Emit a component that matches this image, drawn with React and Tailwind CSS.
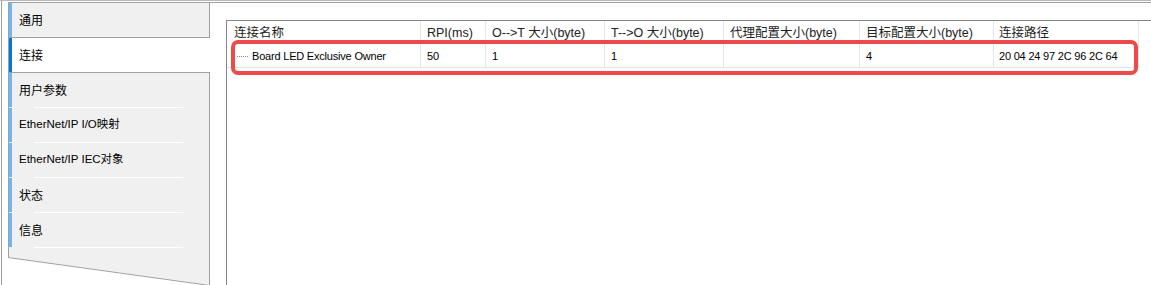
import React from "react";

const FONT = { fontFamily: '"Noto Sans CJK SC", "Noto Sans", sans-serif' };
const MIX = '"Liberation Sans", "Noto Sans CJK SC", sans-serif';

function Tab({ label, variant, small }) {
  const base = "flex flex-row w-[202px] flex-none border-l border-[#a0a0a0]";
  let cls = base;
  if (variant === "first") cls += " h-[36px] bg-[#f0f0f0] border-t border-b border-r";
  else if (variant === "selected") cls += " h-[34px] bg-white";
  else if (variant === "third") cls += " h-[36px] bg-[#f0f0f0] border-t border-r";
  else cls += " h-[35px] bg-[#f0f0f0] border-r";
  const barColor = variant === "selected" ? "bg-[#0078d7]" : "bg-[#6cb7f5]";
  const sep = variant === "third" || variant === "normal";
  return (
    <div className={cls}>
      <div className={`w-[3px] flex-none ${barColor} ${sep ? "mb-px" : ""}`} />
      <div className="flex flex-col flex-1">
        <div
          className={`flex-1 flex items-center pl-[7px] text-black ${small ? "text-[11.5px]" : "text-[12px]"}`}
          style={small ? { fontFamily: MIX } : undefined}
        >
          {label}
        </div>
        {sep && <div className="h-px ml-[22px] w-[149px] bg-white" />}
      </div>
    </div>
  );
}

const cols = [
  { w: "w-[194px]", pl: "pl-[7px]", h: "连接名称" },
  { w: "w-[65px]", pl: "pl-[6px]", h: "RPI(ms)", d: "50" },
  { w: "w-[119px]", pl: "pl-[6px]", h: "O-->T 大小(byte)", d: "1" },
  { w: "w-[119px]", pl: "pl-[6px]", h: "T-->O 大小(byte)", d: "1" },
  { w: "w-[136px]", pl: "pl-[6px]", h: "代理配置大小(byte)", d: "" },
  { w: "w-[134px]", pl: "pl-[6px]", h: "目标配置大小(byte)", d: "4" },
  { w: "w-[145px]", pl: "pl-[5px]", h: "连接路径", d: "20 04 24 97 2C 96 2C 64" },
];

export default function App() {
  return (
    <div
      className="relative w-[1151px] h-[285px] bg-white overflow-hidden flex flex-row border-t border-[#b9b9b9] pt-px"
      style={FONT}
    >
      {/* left strip */}
      <div className="w-[8px] flex-none flex flex-row -mt-[2px]">
        <div className="w-px flex-none" />
        <div className="w-px flex-none bg-[#a0a0a0]" />
      </div>

      {/* sidebar */}
      <div className="w-[202px] flex-none flex flex-col">
        <Tab label="通用" variant="first" />
        <Tab label="连接" variant="selected" />
        <Tab label="用户参数" variant="third" />
        <Tab label="EtherNet/IP I/O映射" variant="normal" small />
        <Tab label="EtherNet/IP IEC对象" variant="normal" small />
        <Tab label="状态" variant="normal" />
        <Tab label="信息" variant="normal" />
        <svg width="202" height="37" viewBox="0 0 202 37" className="block flex-none">
          <polygon points="0,0 202,0 202,37 0,9" fill="#f0f0f0" />
          <line x1="0.5" y1="0" x2="0.5" y2="9.5" stroke="#a0a0a0" strokeWidth="1" />
          <line x1="201.5" y1="0" x2="201.5" y2="37" stroke="#a0a0a0" strokeWidth="1" />
          <line x1="0" y1="9.5" x2="202" y2="37.5" stroke="#a0a0a0" strokeWidth="1" />
        </svg>
      </div>

      {/* content panel */}
      <div className="flex-1 flex flex-col border-t border-[#a0a0a0] pl-[16px] pt-[17px] bg-white">
        <div className="flex-1 flex flex-col border-l border-t border-[#828790]">
          {/* header */}
          <div className="flex flex-row h-[22px] flex-none" style={{ fontFamily: MIX }}>
            {cols.map((c, i) => (
              <div
                key={i}
                className={`${c.w} ${c.pl} flex-none flex items-center border-r border-[#e5e5e5] text-[12.5px] text-[#222] whitespace-nowrap overflow-hidden pt-[2px]`}
              >
                {c.h}
              </div>
            ))}
          </div>
          {/* data row */}
          <div
            className="flex flex-row h-[25px] flex-none tracking-[-0.2px]"
            style={{ fontFamily: MIX }}
          >
            <div className="w-[194px] flex-none flex items-center border-r border-b border-[#e5e5e5] pl-[10px] pt-[3px] text-[11px] text-black whitespace-nowrap">
              <span className="w-[11px] h-0 border-t border-dotted border-[#8a8a8a] mr-[4px]" />
              Board LED Exclusive Owner
            </div>
            {cols.slice(1).map((c, i) => (
              <div
                key={i}
                className={`${c.w} ${c.pl} flex-none flex items-center border-r border-b border-[#e5e5e5] pt-[3px] text-[11px] text-black whitespace-nowrap`}
              >
                {c.d}
              </div>
            ))}
          </div>
        </div>
      </div>

      {/* red highlight box */}
      <div className="absolute left-[231px] top-[39px] w-[907px] h-[35px] border-4 border-[#ef4a4a] rounded-[7px]" />
    </div>
  );
}
